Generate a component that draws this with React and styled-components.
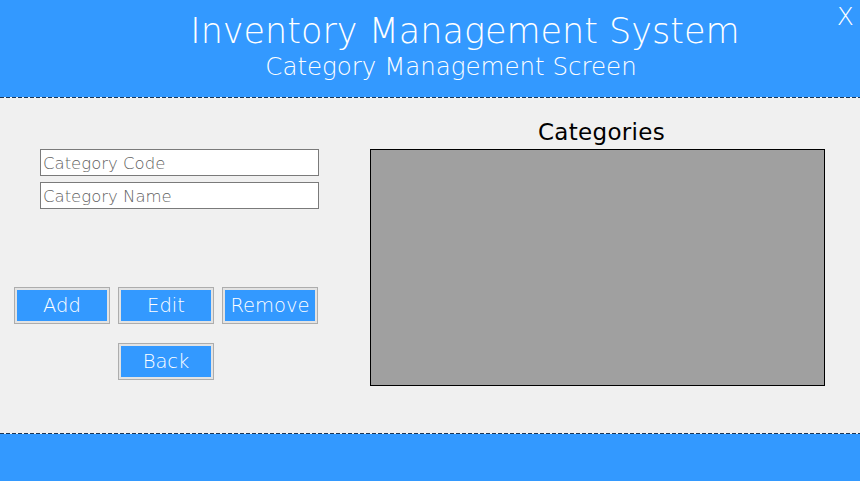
import React from "react"
import styled, { createGlobalStyle } from "styled-components"

const color = {
  blue: "#3399ff",
  panel: "#f0f0f0",
  grid: "#a0a0a0",
  navy: "#1b3554",
}

const font = `"DejaVu Sans", "Liberation Sans", sans-serif`

const GlobalStyle = createGlobalStyle`
  html, body {
    margin: 0;
    padding: 0;
    background: ${color.panel};
  }
  * {
    box-sizing: border-box;
  }
`

const Page = styled.div`
  width: 860px;
  height: 481px;
  display: flex;
  flex-direction: column;
  background: ${color.panel};
  font-family: ${font};
  overflow: hidden;
`

const Header = styled.header`
  position: relative;
  height: 97px;
  background: ${color.blue};
  color: #fff;
  display: flex;
  flex-direction: column;
  align-items: center;
  padding-top: 11px;
`

const Title = styled.h1`
  margin: ${props => props.top}px 0 0 ${props => props.offset}px;
  font-size: ${props => props.size}px;
  font-weight: 200;
  line-height: 1.15;
  white-space: nowrap;
`

const CloseButton = styled.button`
  position: absolute;
  top: 2px;
  right: 6px;
  border: none;
  background: transparent;
  color: #fff;
  font-family: ${font};
  font-size: 25px;
  font-weight: 200;
  padding: 0;
  line-height: 1.2;
`

const Divider = styled.div`
  height: 1px;
  flex-shrink: 0;
  background: repeating-linear-gradient(
    90deg,
    ${color.navy} 0 4px,
    transparent 4px 6px
  );
`

const Body = styled.main`
  flex: 1;
  display: flex;
`

const LeftPane = styled.section`
  width: 340px;
  display: flex;
  flex-direction: column;
  padding-top: 51px;
`

const Fields = styled.div`
  margin-left: 40px;
  display: flex;
  flex-direction: column;
  gap: 6px;
`

const Field = styled.input`
  width: 279px;
  height: 27px;
  border: 1px solid #7a7a7a;
  background: #fff;
  font-family: ${font};
  font-size: 16.5px;
  font-weight: 200;
  padding: 1px 2px 0;
  outline: none;

  &::placeholder {
    color: #5f5f5f;
    opacity: 1;
  }
`

const Buttons = styled.div`
  margin: 78px 0 0 14px;
  display: grid;
  grid-template-columns: repeat(3, 96px);
  column-gap: 8px;
  row-gap: 19px;
`

const Button = styled.button`
  grid-column: ${props => props.col || "auto"};
  height: 37px;
  border: 1px solid #adadad;
  background: ${color.blue};
  box-shadow: inset 0 0 0 2px #e3e3e3;
  color: #fff;
  font-family: ${font};
  font-size: 19.5px;
  font-weight: 200;
  padding: 0;
`

const RightPane = styled.section`
  margin-left: 30px;
  width: 455px;
  display: flex;
  flex-direction: column;
  padding-top: 20px;
`

const GridLabel = styled.div`
  text-align: center;
  padding-left: 8px;
  font-size: 23px;
  font-weight: 400;
  letter-spacing: 0.3px;
  line-height: 28px;
  color: #000;
`

const Grid = styled.div`
  margin-top: 3px;
  height: 237px;
  border: 1px solid #000;
  background: ${color.grid};
`

const Footer = styled.footer`
  height: 47px;
  background: ${color.blue};
`

export default function App() {
  return (
    <>
      <GlobalStyle />
      <Page>
        <Header>
          <Title size={35} top={0} offset={70}>
            Inventory Management System
          </Title>
          <Title size={24.5} top={2} offset={42}>
            Category Management Screen
          </Title>
          <CloseButton type="button">X</CloseButton>
        </Header>
        <Divider />
        <Body>
          <LeftPane>
            <Fields>
              <Field placeholder="Category Code" />
              <Field placeholder="Category Name" />
            </Fields>
            <Buttons>
              <Button type="button">Add</Button>
              <Button type="button">Edit</Button>
              <Button type="button">Remove</Button>
              <Button type="button" col={2}>
                Back
              </Button>
            </Buttons>
          </LeftPane>
          <RightPane>
            <GridLabel>Categories</GridLabel>
            <Grid />
          </RightPane>
        </Body>
        <Divider />
        <Footer />
      </Page>
    </>
  )
}
